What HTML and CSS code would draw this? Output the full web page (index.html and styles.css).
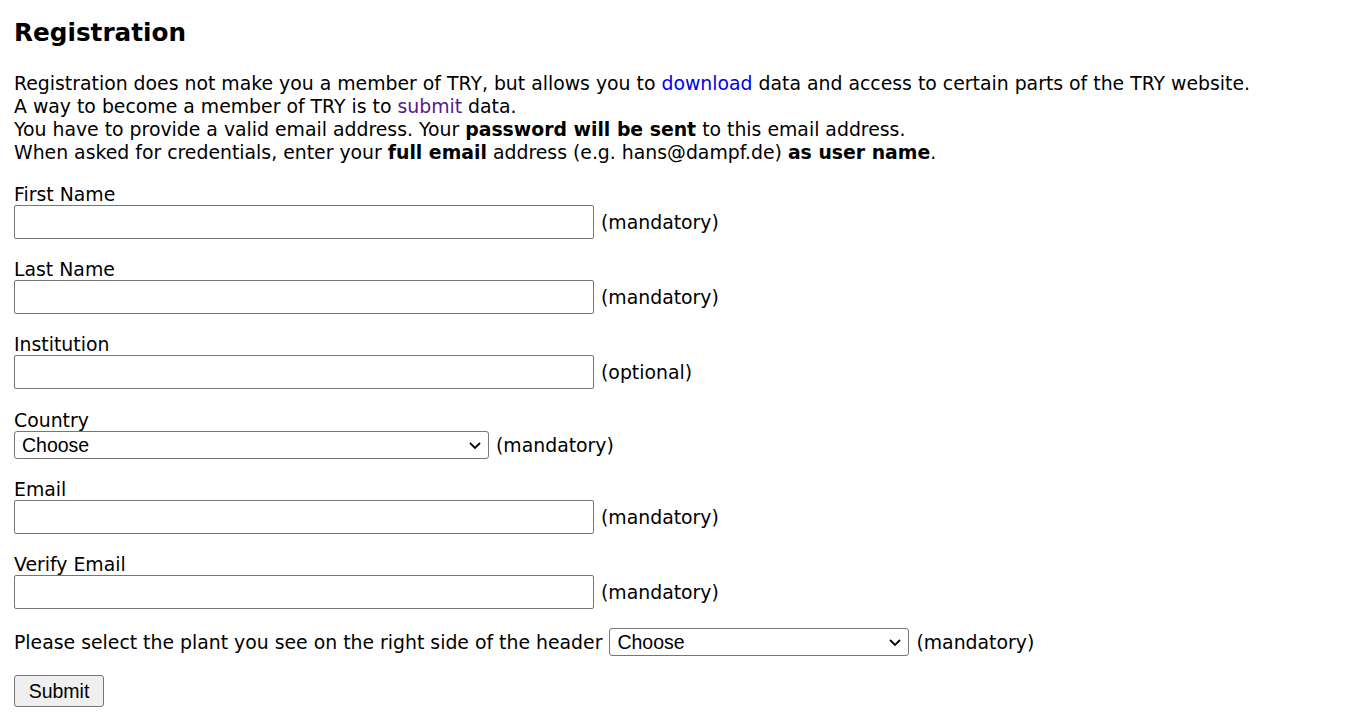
FILE: index.html
```html
<!DOCTYPE html>
<html>
<head>
<meta charset="utf-8">
<link rel="stylesheet" href="styles.css">
</head>
<body>
<div class="page">
  <h1 class="title">Registration</h1>
  <p class="intro">Registration does not make you a member of TRY, but allows you to <a href="#" class="link">download</a> data and access to certain parts of the TRY website.<br>
  A way to become a member of TRY is to <a href="#" class="link visited">submit</a> data.<br>
  You have to provide a valid email address. Your <b>password will be sent</b> to this email address.<br>
  When asked for credentials, enter your <b>full email</b> address (e.g. hans@dampf.de) <b>as user name</b>.</p>
  <form class="form">
    <div class="field">
      <label class="label">First Name</label>
      <div class="row"><input class="text" type="text"><span class="note">(mandatory)</span></div>
    </div>
    <div class="field">
      <label class="label">Last Name</label>
      <div class="row"><input class="text" type="text"><span class="note">(mandatory)</span></div>
    </div>
    <div class="field field-pre-sel">
      <label class="label">Institution</label>
      <div class="row"><input class="text" type="text"><span class="note">(optional)</span></div>
    </div>
    <div class="field">
      <label class="label">Country</label>
      <div class="row">
        <span class="selwrap sel-country"><select class="sel"><option>Choose</option></select><svg class="chev" width="14" height="9" viewBox="0 0 14 9"><path d="M2 2 L7 7 L12 2" fill="none" stroke="#000" stroke-width="1.8"/></svg></span>
        <span class="note">(mandatory)</span>
      </div>
    </div>
    <div class="field">
      <label class="label">Email</label>
      <div class="row"><input class="text" type="text"><span class="note">(mandatory)</span></div>
    </div>
    <div class="field field-last">
      <label class="label">Verify Email</label>
      <div class="row"><input class="text" type="text"><span class="note">(mandatory)</span></div>
    </div>
    <div class="row plant">
      <span>Please select the plant you see on the right side of the header</span>
      <span class="selwrap sel-plant"><select class="sel"><option>Choose</option></select><svg class="chev" width="14" height="9" viewBox="0 0 14 9"><path d="M2 2 L7 7 L12 2" fill="none" stroke="#000" stroke-width="1.8"/></svg></span>
      <span class="note">(mandatory)</span>
    </div>
    <div class="actions"><button type="button" class="btn">Submit</button></div>
  </form>
</div>
</body>
</html>
```
FILE: styles.css
```css
html, body { margin: 0; padding: 0; background: #fff; }
body { font-family: "DejaVu Sans", Verdana, sans-serif; font-size: 18.85px; color: #000; }
.page { padding: 14px 14px; }
.title { font-size: 24.7px; font-weight: bold; margin: 4px 0 0 0; line-height: 30px; }
.intro { margin: 24px 0 0 0; line-height: 23px; }
.link { color: #0000ee; text-decoration: none; }
.link.visited { color: #551a8b; }
.form { margin-top: 20px; display: flex; flex-direction: column; }
.field { display: flex; flex-direction: column; margin-bottom: 20px; }
.field-pre-sel { margin-bottom: 21px; }
.field-last { margin-bottom: 19px; }
.label { line-height: 21px; }
.row { display: flex; align-items: center; gap: 7px; }
.text { width: 580px; height: 34px; box-sizing: border-box; border: 1px solid #767676; border-radius: 2px; margin: 0; padding: 0 4px; font: inherit; }
.selwrap { position: relative; display: inline-block; height: 28px; }
.sel { appearance: none; -webkit-appearance: none; width: 100%; height: 28px; box-sizing: border-box; border: 1px solid #767676; border-radius: 3px; margin: 0; padding: 0 0 0 7px; font-family: "Liberation Sans", Arial, sans-serif; font-size: 19.5px; background: #fff; color: #000; display: block; }
.chev { position: absolute; right: 7px; top: 10px; pointer-events: none; }
.sel-country { width: 475px; }
.sel-plant { width: 300px; }
.plant { gap: 7px; }
.actions { margin-top: 19px; }
.btn { font-family: "Liberation Sans", Arial, sans-serif; font-size: 19.5px; height: 32px; width: 90px; padding: 0; border: 1px solid #767676; border-radius: 3px; background: #efefef; color: #000; display: block; }
```
